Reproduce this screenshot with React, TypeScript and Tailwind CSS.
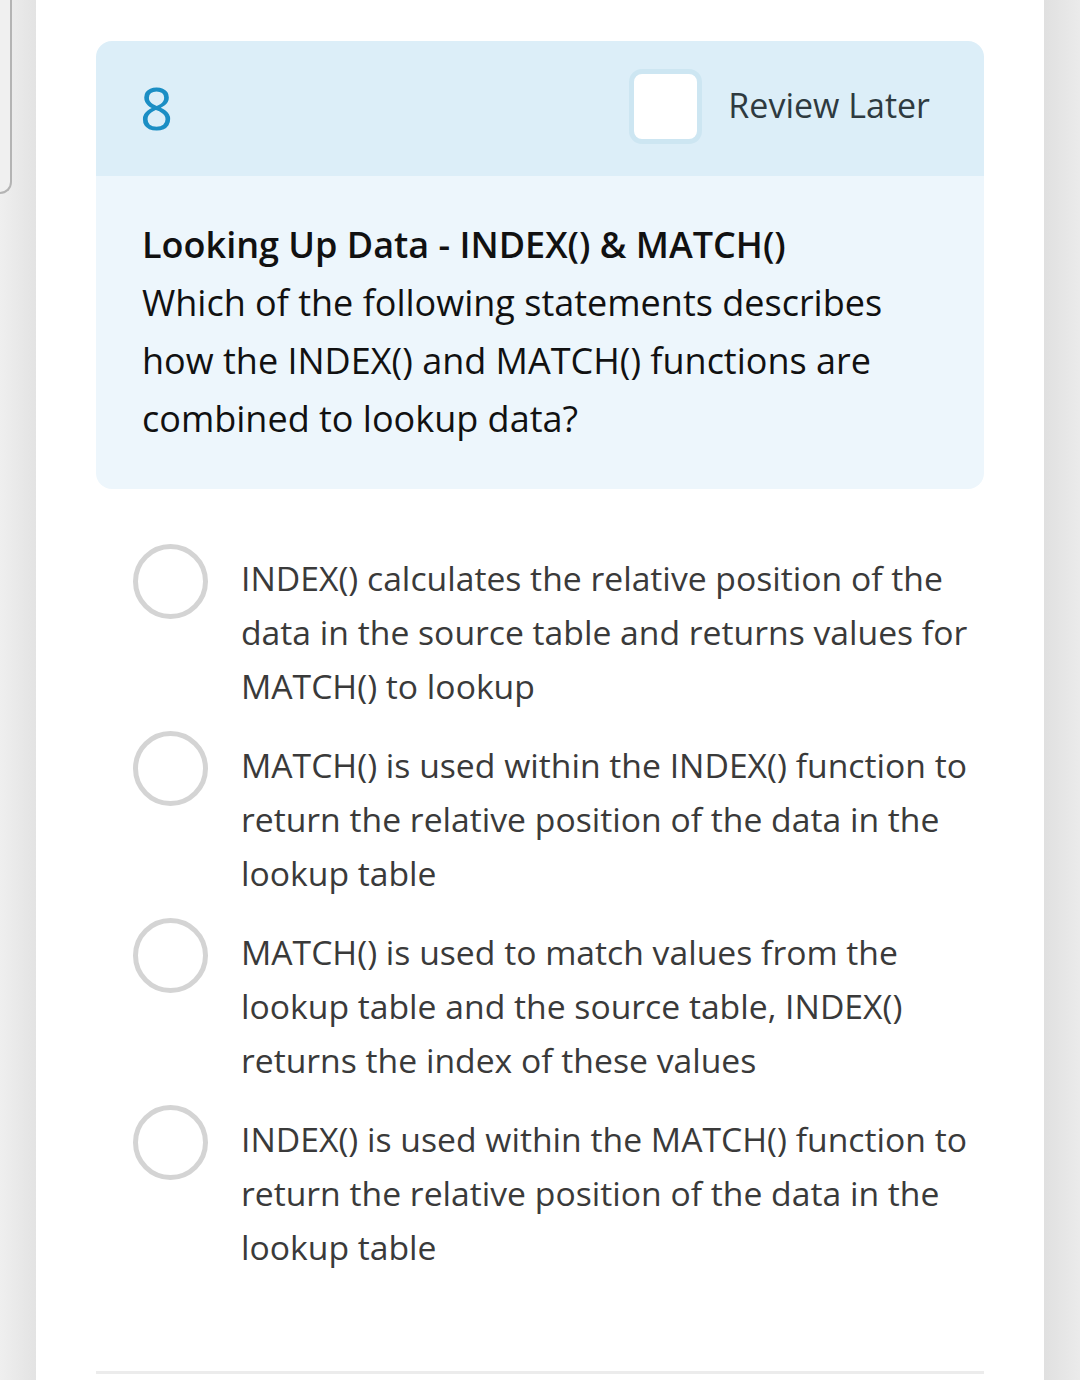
import React from "react";

// ------------------------------------------------------------------
// Data
// ------------------------------------------------------------------

const OPTIONS = [
  "INDEX() calculates the relative position of the data in the source table and returns values for MATCH() to lookup",
  "MATCH() is used within the INDEX() function to return the relative position of the data in the lookup table",
  "MATCH() is used to match values from the lookup table and the source table, INDEX() returns the index of these values",
  "INDEX() is used within the MATCH() function to return the relative position of the data in the lookup table",
];

const FONT = "font-['Open_Sans',_'Noto_Sans',_sans-serif]";

// ------------------------------------------------------------------
// Pieces
// ------------------------------------------------------------------

function Option({ text }: { text: string }) {
  return (
    <div className="flex items-start">
      <span className="ml-[37px] w-[75px] h-[75px] shrink-0 rounded-full border-[5px] border-[#d4d4d4] bg-white" />
      <p className="ml-[33px] pt-[7px] pr-[8px] text-[33.7px] leading-[54px] text-[#3a3a3a]">
        {text}
      </p>
    </div>
  );
}

// ------------------------------------------------------------------
// Page
// ------------------------------------------------------------------

export default function App() {
  return (
    <div className={`${FONT} flex h-[1380px] w-[1080px] overflow-hidden bg-[#e6e6e6]`}>
      {/* left rail */}
      <div className="w-[36px] shrink-0 bg-gradient-to-r from-[#efefef] to-[#e3e3e3]">
        <div className="w-[12px] h-[194px] rounded-br-[12px] border-r-2 border-b-2 border-[#b4b4b4] bg-[#f0f0f0]" />
      </div>

      {/* main */}
      <main className="w-[1008px] shrink-0 bg-white px-[60px] pt-[41px]">
        <section className="rounded-[16px] overflow-hidden">
          <header className="h-[135px] bg-[#dceef8] flex items-center justify-between pl-[44px] pr-[54px]">
            <span className="text-[58px] leading-none text-[#1b8ec4] -mt-[2px]">8</span>
            <label className="flex items-center gap-[26px] -mt-[4px]">
              <span className="w-[73px] h-[75px] rounded-[13px] border-[5px] border-[#cde6f2] bg-white" />
              <span className="text-[34px] leading-none text-[#2e3a40] -mt-[4px]">Review Later</span>
            </label>
          </header>
          <div className="bg-[#edf6fc] pl-[46px] pr-[40px] pt-[40px] pb-[41px] text-[36px] leading-[58px] text-[#111]">
            <p className="font-semibold">Looking Up Data - INDEX() &amp; MATCH()</p>
            <p>
              Which of the following statements describes how the INDEX() and MATCH() functions are
              combined to lookup data?
            </p>
          </div>
        </section>

        <div className="mt-[55px] flex flex-col gap-[18px]">
          {OPTIONS.map((o) => (
            <Option key={o} text={o} />
          ))}
        </div>

        <div className="mt-[97px] h-[3px] bg-[#ececec]" />
      </main>

      {/* right rail */}
      <div className="w-[36px] shrink-0 bg-gradient-to-r from-[#e0e0e0] to-[#ebebeb]" />
    </div>
  );
}
